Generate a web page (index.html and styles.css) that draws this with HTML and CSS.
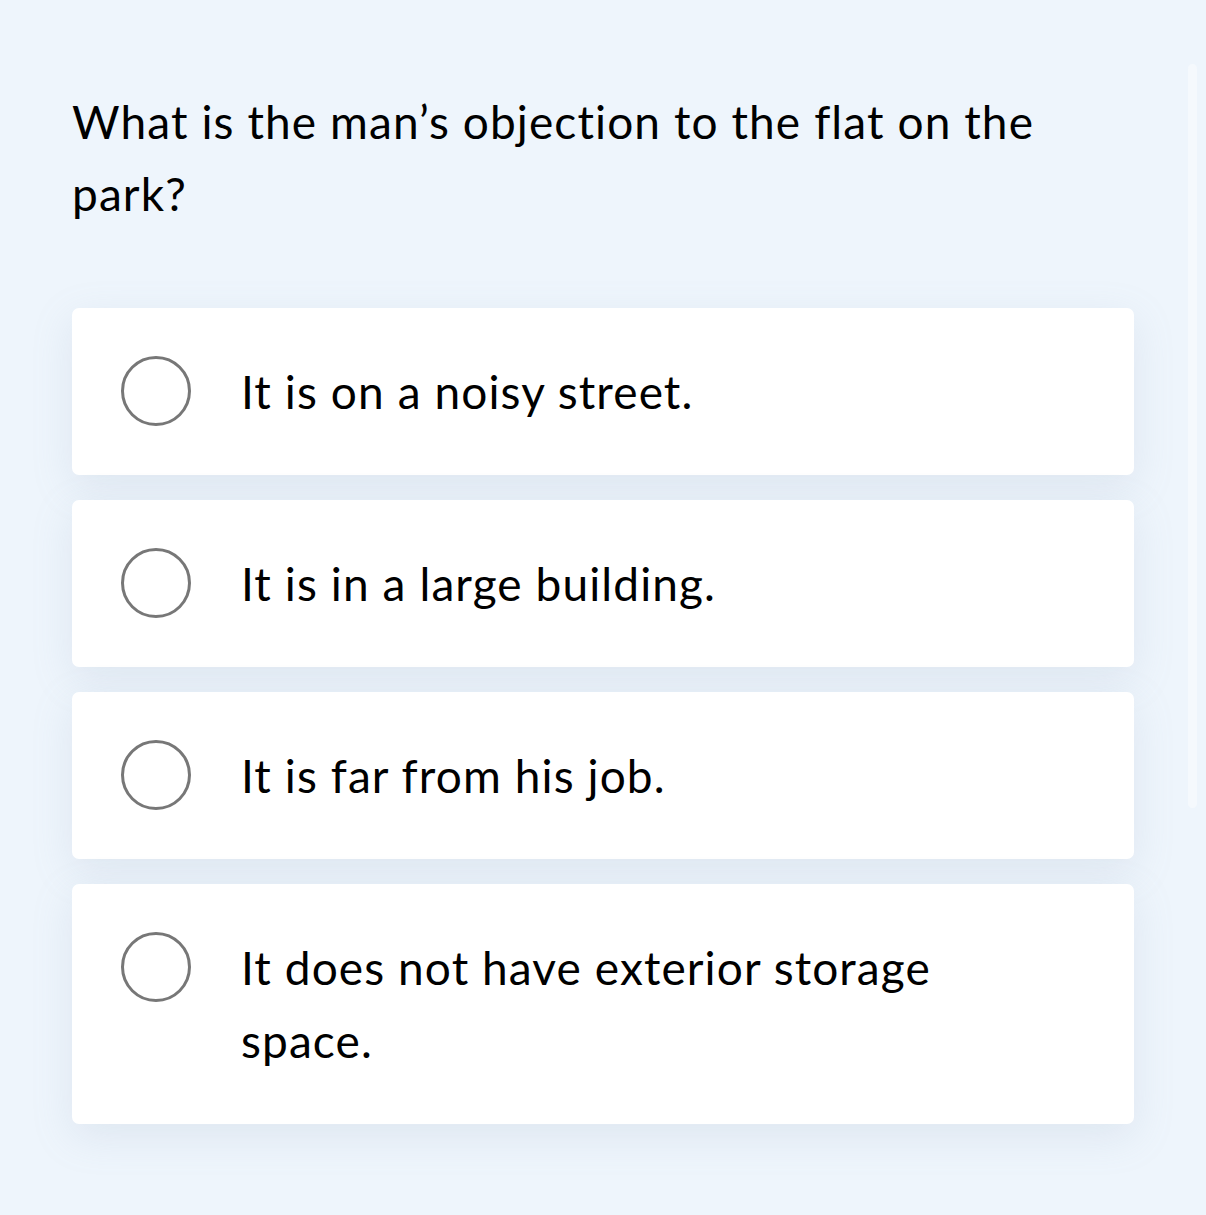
FILE: index.html
```html
<!doctype html>
<html lang="en">
 <head>
  <meta charset="UTF-8">
  <title>Question</title>
  <link rel="stylesheet" href="styles.css">
 </head>
 <body>
  <section class="quiz">
   <h2 class="question">What is the man’s objection to the flat on the park?</h2>
   <div class="options">
    <label class="option">
     <span class="radio"></span>
     <span class="text">It is on a noisy street.</span>
    </label>
    <label class="option">
     <span class="radio"></span>
     <span class="text">It is in a large building.</span>
    </label>
    <label class="option">
     <span class="radio"></span>
     <span class="text">It is far from his job.</span>
    </label>
    <label class="option">
     <span class="radio"></span>
     <span class="text">It does not have exterior storage space.</span>
    </label>
   </div>
  </section>
  <div class="scrollbar"></div>
 </body>
</html>
```

FILE: styles.css
```css
*
{
  margin: 0;
  padding: 0;
  box-sizing: border-box;
}
body
{
  background: #eef5fc;
  font-family: 'Lato', sans-serif;
  color: #000;
  min-height: 100vh;
}
.quiz
{
  padding: 86px 72px 0;
}
.question
{
  font-size: 46px;
  font-weight: 400;
  line-height: 72px;
  letter-spacing: 1.1px;
  max-width: 1040px;
}
.options
{
  margin-top: 78px;
  display: flex;
  flex-direction: column;
  gap: 25px;
}
.option
{
  display: flex;
  align-items: flex-start;
  gap: 50px;
  background: #fff;
  border-radius: 7px;
  padding: 47px 49px;
  box-shadow: 0 12px 40px rgba(140, 158, 182, 0.17);
}
.radio
{
  flex: none;
  width: 70px;
  height: 70px;
  border: 3px solid #777;
  border-radius: 50%;
  margin-top: 1px;
}
.text
{
  font-size: 46px;
  line-height: 73px;
  letter-spacing: 1.1px;
  max-width: 720px;
}
.scrollbar
{
  position: absolute;
  top: 64px;
  left: 1188px;
  width: 9px;
  height: 744px;
  border-radius: 5px;
  background: #f5f9fd;
}
```
